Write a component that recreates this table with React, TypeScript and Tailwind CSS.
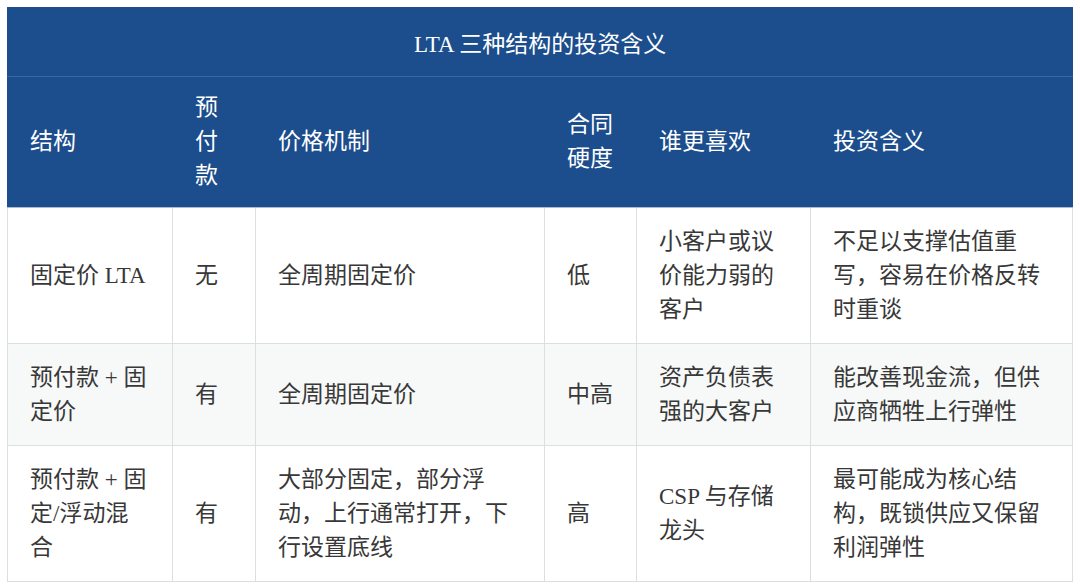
import React from "react";

type Row = {
  structure: string;
  prepay: string;
  pricing: string;
  hardness: string;
  buyer: string;
  meaning: string;
};

const rows: Row[] = [
  {
    structure: "固定价 LTA",
    prepay: "无",
    pricing: "全周期固定价",
    hardness: "低",
    buyer: "小客户或议价能力弱的客户",
    meaning: "不足以支撑估值重写，容易在价格反转时重谈",
  },
  {
    structure: "预付款 + 固定价",
    prepay: "有",
    pricing: "全周期固定价",
    hardness: "中高",
    buyer: "资产负债表强的大客户",
    meaning: "能改善现金流，但供应商牺牲上行弹性",
  },
  {
    structure: "预付款 + 固定/浮动混合",
    prepay: "有",
    pricing: "大部分固定，部分浮动，上行通常打开，下行设置底线",
    hardness: "高",
    buyer: "CSP 与存储龙头",
    meaning: "最可能成为核心结构，既锁供应又保留利润弹性",
  },
];

const headers = ["结构", "预付款", "价格机制", "合同硬度", "谁更喜欢", "投资含义"];

export default function App() {
  return (
    <div className="w-[1080px] h-[588px] bg-white pt-[7px] pl-[7px]">
      <table
        className="table-fixed border-collapse w-[1065px] text-[23px] leading-[34px] text-[#383838]"
        style={{ fontFamily: '"Liberation Serif", "Noto Sans CJK SC", serif' }}
      >
        <colgroup>
          <col className="w-[165px]" />
          <col className="w-[83px]" />
          <col className="w-[289px]" />
          <col className="w-[92px]" />
          <col className="w-[174px]" />
          <col className="w-[262px]" />
        </colgroup>
        <thead>
          <tr className="bg-[#1c4d8c] text-white">
            <th
              colSpan={6}
              className="h-[69px] pt-[20px] pb-[14px] text-center font-normal border border-[#1c4d8c] border-b-[#3a66a3]"
            >
              LTA 三种结构的投资含义
            </th>
          </tr>
          <tr className="bg-[#1c4d8c] text-white">
            {headers.map((h) => (
              <th
                key={h}
                className="h-[130px] px-[22px] py-[14px] text-left align-middle font-normal border border-[#1c4d8c] border-b-[#a9bad3]"
              >
                {h}
              </th>
            ))}
          </tr>
        </thead>
        <tbody>
          {rows.map((r, i) => (
            <tr key={i} className={i === 1 ? "bg-[#f7f8f8]" : "bg-white"}>
              {[r.structure, r.prepay, r.pricing, r.hardness, r.buyer, r.meaning].map((c, j) => (
                <td
                  key={j}
                  className="px-[22px] py-[16.5px] align-middle border border-[#dcdfe2]"
                >
                  {c}
                </td>
              ))}
            </tr>
          ))}
        </tbody>
      </table>
    </div>
  );
}
